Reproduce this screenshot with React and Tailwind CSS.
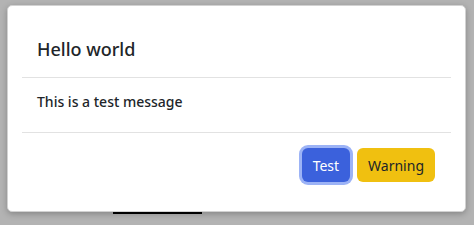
import React from "react";

const App = () => {
  return (
    <div
      className="w-[474px] h-[225px] bg-[#b3b3b3] pt-[5px] pl-[7px] overflow-hidden"
      style={{ fontFamily: "'Noto Sans', 'Open Sans', sans-serif" }}>
      <div className="w-[459px] h-[207px] bg-white rounded-[5px] border border-[#d2d2d2] shadow-[0_2px_6px_rgba(0,0,0,0.25)] px-[14px] text-[#212529]">
        <div className="pl-[15px] pt-[31px] pb-[16px]">
          <h3 className="text-[18px] leading-[24px] font-medium">Hello world</h3>
        </div>
        <div className="h-px bg-[#e2e2e2]" />
        <div className="pl-[15px] pt-[14px] pb-[20px]">
          <p className="text-[14px] leading-[20px] font-medium">This is a test message</p>
        </div>
        <div className="h-px bg-[#e2e2e2]" />
        <div className="flex justify-end gap-[7px] pt-[15px] pr-[16px]">
          <button className="h-[34px] px-[11px] rounded-[6px] bg-[#3b61dc] text-white text-[14px] ring-[3px] ring-[#9cb3f6]">
            Test
          </button>
          <button className="h-[34px] px-[11px] rounded-[6px] bg-[#f0c010] text-[#212529] text-[14px]">
            Warning
          </button>
        </div>
      </div>
      <div className="ml-[106px] w-[89px] h-[2px] bg-black" />
    </div>
  );
};

export default App;
